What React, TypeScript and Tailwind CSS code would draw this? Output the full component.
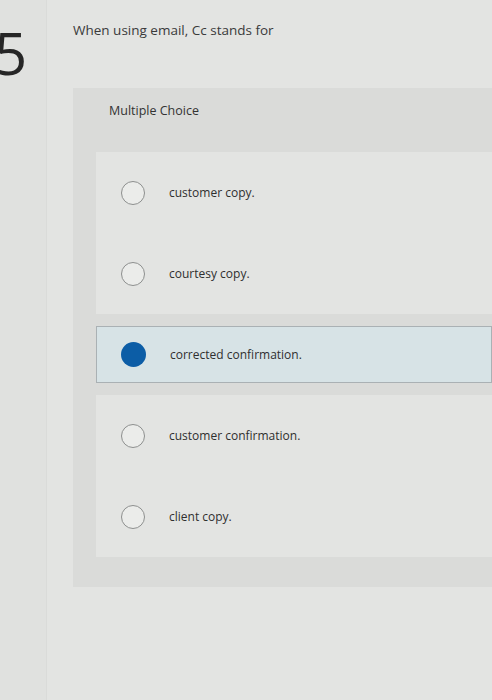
import React from "react";

const options = [
  { label: "customer copy.", selected: false },
  { label: "courtesy copy.", selected: false },
  { label: "corrected confirmation.", selected: true },
  { label: "customer confirmation.", selected: false },
  { label: "client copy.", selected: false },
];

export default function App() {
  return (
    <div
      className="w-[492px] h-[700px] overflow-hidden bg-[#e3e4e2] flex"
      style={{ fontFamily: '"Open Sans", "Liberation Sans", sans-serif' }}
    >
      <div className="w-[47px] shrink-0 border-r border-[#dadbd9] bg-[#e0e1df] relative overflow-hidden">
        <div className="absolute left-[-6px] top-[24px] text-[58px] leading-none font-normal text-[#262626]">
          5
        </div>
      </div>
      <div className="flex-1 flex flex-col pl-[26px]">
        <div className="pt-[20px] text-[13.5px] font-medium text-[#3a3a3a] h-[88px]">When using email, Cc stands for</div>
        <div className="flex flex-col bg-[#dadbd9] h-[499px]">
          <div className="h-[47px] pl-[36px] flex items-center text-[12.5px] font-medium text-[#333]">Multiple Choice</div>
          <div className="flex-1 flex flex-col pl-[23px] pt-[17px]">
            {options.map((o) => (
              <div
                key={o.label}
                className={
                  o.selected
                    ? "h-[57px] my-[12px] flex items-center border border-[#aab1b4] bg-[#d7e3e6]"
                    : "h-[81px] flex items-center bg-[#e3e4e2]"
                }
              >
                <div className="w-[73px] flex justify-center">
                  {o.selected ? (
                    <div className="w-[25px] h-[25px] rounded-full bg-[#0c5da6]" />
                  ) : (
                    <div className="w-[24px] h-[24px] rounded-full border border-[#8d8f8e] bg-[#ebecea]" />
                  )}
                </div>
                <div className="text-[12px] font-medium text-[#2f2f2f]">{o.label}</div>
              </div>
            ))}
          </div>
        </div>
      </div>
    </div>
  );
}
